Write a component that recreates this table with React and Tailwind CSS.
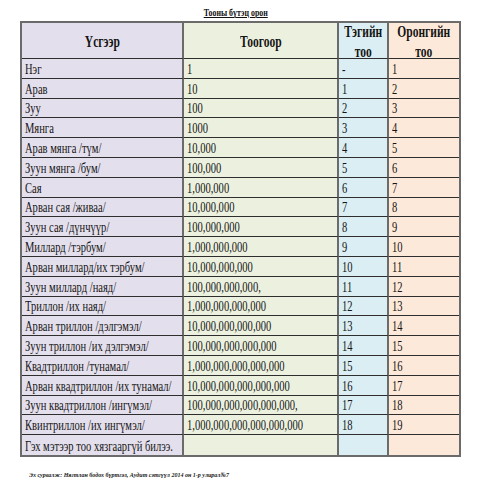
const rows = [
  ["Нэг", "1", "-", "1"],
  ["Арав", "10", "1", "2"],
  ["Зуу", "100", "2", "3"],
  ["Мянга", "1000", "3", "4"],
  ["Арав мянга /түм/", "10,000", "4", "5"],
  ["Зуун мянга /бум/", "100,000", "5", "6"],
  ["Сая", "1,000,000", "6", "7"],
  ["Арван сая /живаа/", "10,000,000", "7", "8"],
  ["Зуун сая /дүнчүүр/", "100,000,000", "8", "9"],
  ["Миллард /тэрбум/", "1,000,000,000", "9", "10"],
  ["Арван миллард/их тэрбум/", "10,000,000,000", "10", "11"],
  ["Зуун миллард /наяд/", "100,000,000,000,", "11", "12"],
  ["Триллон /их наяд/", "1,000,000,000,000", "12", "13"],
  ["Арван триллон /дэлгэмэл/", "10,000,000,000,000", "13", "14"],
  ["Зуун триллон /их дэлгэмэл/", "100,000,000,000,000", "14", "15"],
  ["Квадтриллон /тунамал/", "1,000,000,000,000,000", "15", "16"],
  ["Арван квадтриллон /их тунамал/", "10,000,000,000,000,000", "16", "17"],
  ["Зуун квадтриллон /ингүмэл/", "100,000,000,000,000,000,", "17", "18"],
  ["Квинтриллон /их ингүмэл/", "1,000,000,000,000,000,000", "18", "19"],
  ["Гэх мэтээр тоо хязгааргүй билээ.", "", "", ""],
];

const colBg = ["bg-[#e4dfec]", "bg-[#ebf1de]", "bg-[#daeef3]", "bg-[#fde9d9]"];

function Cell({ text, col, last }) {
  return (
    <div
      className={`${colBg[col]} ${col < 3 ? "border-r-2 border-r-[#6b6b6b]" : ""} ${last ? "" : "border-b border-b-[#2e2e2e]"} h-[19.8px] flex items-end pl-[3px] overflow-hidden`}
    >
      <span className="inline-block origin-left scale-x-[0.68] whitespace-nowrap text-[15.5px] leading-[18px] text-[#151515]">
        {text}
      </span>
    </div>
  );
}

function Head({ children, col }) {
  return (
    <div
      className={`${colBg[col]} ${col < 3 ? "border-r-2 border-r-[#6b6b6b]" : ""} border-b border-b-[#2e2e2e] h-[36px] flex items-center justify-center text-center pt-[2px]`}
    >
      <span className="inline-block scale-x-[0.72] font-bold text-[16px] leading-[20px] text-[#151515]">
        {children}
      </span>
    </div>
  );
}

export default function App() {
  return (
    <div className="w-[480px] h-[480px] bg-white font-['Liberation_Serif',serif] flex flex-col overflow-hidden">
      <div className="h-[21px] shrink-0 flex items-end justify-center pb-[2px] pr-[9px] leading-[12px]">
        <span className="inline-block scale-x-[0.75] font-bold text-[10.5px] leading-[12px] text-[#111] underline">
          Тооны бүтэц орон
        </span>
      </div>
      <div className="shrink-0 ml-[20px] w-[441px] border-2 border-[#6b6b6b] grid grid-cols-[162px_155px_50px_70px]">
        <Head col={0}>Үсгээр</Head>
        <Head col={1}>Тоогоор</Head>
        <Head col={2}>
          Тэгийн
          <br />
          тоо
        </Head>
        <Head col={3}>
          Оронгийн
          <br />
          тоо
        </Head>
        {rows.map((r, i) =>
          r.map((t, c) => (
            <Cell key={i + "-" + c} text={t} col={c} last={i === rows.length - 1} />
          ))
        )}
      </div>
      <div className="shrink-0 pl-[29px] pt-[11px] leading-[8px]">
        <span className="inline-block origin-left scale-x-[0.86] italic font-bold text-[7px] leading-[8px] text-[#222] whitespace-nowrap">
          Эх сурвалж: Нягтлан бодох бүртгэл, Аудит сэтгүүл 2014 он 1-р улирал№7
        </span>
      </div>
    </div>
  );
}
